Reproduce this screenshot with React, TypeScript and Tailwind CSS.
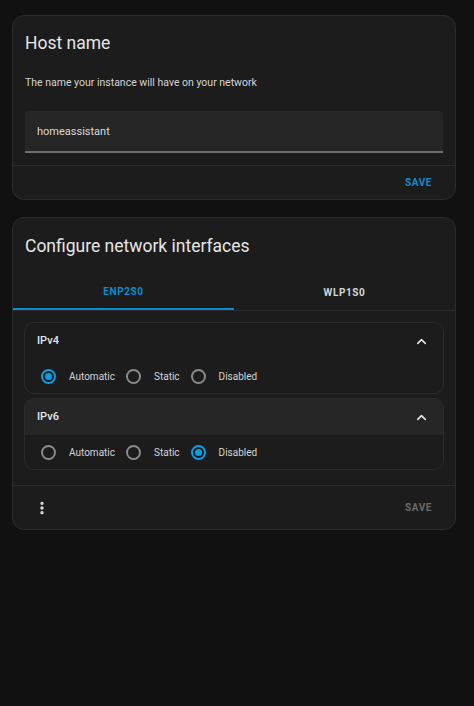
import { ChevronUp, EllipsisVertical } from "lucide-react"

type Choice = "auto" | "static" | "disabled"

function Radio({ checked, label }: { checked: boolean; label: string }) {
  return (
    <div className="flex items-center">
      <div
        className={
          checked
            ? "w-[15px] h-[15px] rounded-full border-2 border-[#0a9fe3] flex items-center justify-center"
            : "w-[15px] h-[15px] rounded-full border-2 border-[#8a8a8a]"
        }
      >
        {checked && <div className="w-[7px] h-[7px] rounded-full bg-[#0a9fe3]" />}
      </div>
      <span className="ml-[13px] mr-[11px] text-[10px] text-[#d4d4d4]">{label}</span>
    </div>
  )
}

function Panel({ title, value, shaded }: { title: string; value: Choice; shaded?: boolean }) {
  return (
    <div className="rounded-[10px] border border-[#2c2c2c] overflow-hidden">
      <div className={`h-[36px] flex items-center justify-between pl-[12px] pr-[14px] ${shaded ? "bg-[#262626]" : ""}`}>
        <span className="text-[11px] font-medium text-[#e6e6e6]">{title}</span>
        <ChevronUp className="w-[15px] h-[15px] text-[#e6e6e6]" strokeWidth={2.5} />
      </div>
      <div className="h-[34px] flex items-center pl-[16px]">
        <Radio checked={value === "auto"} label="Automatic" />
        <Radio checked={value === "static"} label="Static" />
        <Radio checked={value === "disabled"} label="Disabled" />
      </div>
    </div>
  )
}

export default function App() {
  return (
    <div className="min-h-[706px] bg-[#111111] pl-3 pr-[18px] pt-[15px] flex flex-col gap-[17px] font-['Roboto',sans-serif]">
      {/* Host name */}
      <div className="bg-[#1c1c1c] border border-[#2c2c2c] rounded-[12px]">
        <div className="px-3 pt-[15px] pb-[12px]">
          <h2 className="text-[17.5px] leading-[24px] text-[#e6e6e6]">Host name</h2>
          <p className="mt-[20px] text-[10.5px] leading-[16px] text-[#d4d4d4]">
            The name your instance will have on your network
          </p>
          <div className="mt-[20px] h-[42px] bg-[#262626] rounded-t-[4px] border-b-2 border-[#6e6e6e] flex items-center px-3 pt-[3px]">
            <span className="text-[11px] text-[#d9d9d9]">homeassistant</span>
          </div>
        </div>
        <div className="border-t border-[#2c2c2c] h-[34px] flex items-center justify-end pr-[23px]">
          <span className="text-[10px] font-bold tracking-[0.06em] text-[#0a8ccc]">SAVE</span>
        </div>
      </div>

      {/* Network interfaces */}
      <div className="bg-[#1c1c1c] border border-[#2c2c2c] rounded-[12px]">
        <div className="px-3 pt-[16px]">
          <h2 className="text-[17.5px] leading-[24px] text-[#e6e6e6]">Configure network interfaces</h2>
        </div>
        <div className="mt-[17px] flex border-b border-[#2c2c2c]">
          <div className="flex-1 h-[35px] flex items-center justify-center border-b-2 border-[#0a8ccc]">
            <span className="text-[10px] font-bold tracking-[0.06em] text-[#0a8ccc]">ENP2S0</span>
          </div>
          <div className="flex-1 h-[35px] flex items-center justify-center">
            <span className="text-[10px] font-bold tracking-[0.06em] text-[#d4d4d4]">WLP1S0</span>
          </div>
        </div>
        <div className="px-[11px] pt-[11px] pb-[15px] flex flex-col gap-[4px]">
          <Panel title="IPv4" value="auto" />
          <Panel title="IPv6" value="disabled" shaded />
        </div>
        <div className="border-t border-[#2c2c2c] h-[44px] flex items-center justify-between pl-[21px] pr-[23px]">
          <EllipsisVertical className="w-[16px] h-[16px] text-[#e6e6e6]" strokeWidth={3} />
          <span className="text-[10px] font-bold tracking-[0.06em] text-[#6a6a6a]">SAVE</span>
        </div>
      </div>
    </div>
  )
}
